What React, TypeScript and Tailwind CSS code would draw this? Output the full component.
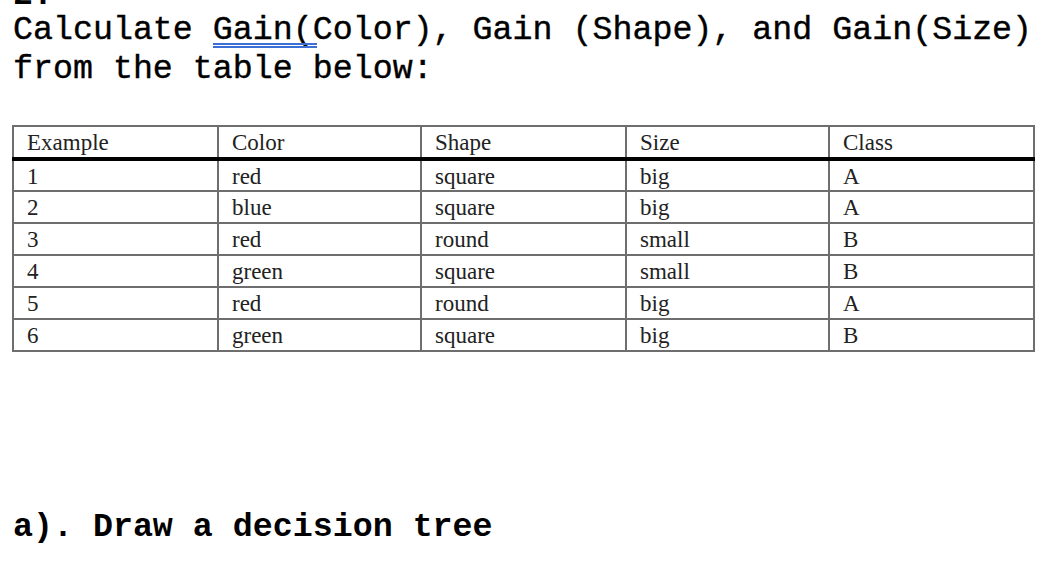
import React from "react";

const ROWS = [
  ["1", "red", "square", "big", "A"],
  ["2", "blue", "square", "big", "A"],
  ["3", "red", "round", "small", "B"],
  ["4", "green", "square", "small", "B"],
  ["5", "red", "round", "big", "A"],
  ["6", "green", "square", "big", "B"],
];

const HEADERS = ["Example", "Color", "Shape", "Size", "Class"];
const WIDTHS = ["w-[205px]", "w-[203px]", "w-[205px]", "w-[203px]", "w-[205px]"];

const mono = { fontFamily: '"Liberation Mono", "Courier New", monospace' };
const serif = { fontFamily: '"Liberation Serif", "Times New Roman", serif' };

export default function App() {
  return (
    <div className="w-[1041px] h-[569px] bg-white overflow-hidden text-black">
      {/* cut off line from previous question */}
      <div className="h-[6px] overflow-hidden pl-[13px]">
        <div
          className="mt-[-24px] text-[33.3px] leading-[39px] font-bold"
          style={mono}
        >
          2.
        </div>
      </div>

      <div
        className="pl-[13px] pt-[5px] text-[33.3px] leading-[39px] [-webkit-text-stroke:0.4px_black]"
        style={mono}
      >
        <div className="whitespace-pre">
          Calculate{" "}
          <span className="relative">
            Gain(
            <span className="absolute left-0 right-[-4px] top-[32px] h-[5px] border-y-2 border-[#3b6fd6]" />
          </span>
          Color), Gain (Shape), and Gain(Size)
        </div>
        <div className="whitespace-pre">from the table below:</div>
      </div>

      <div className="pl-[12px] pt-[36px]">
        <table
          className="border-collapse border-2 border-[#6e6e6e] text-[23px] text-[#222]"
          style={serif}
        >
          <thead>
            <tr className="h-[33px]">
              {HEADERS.map((h, i) => (
                <th
                  key={h}
                  className={`${WIDTHS[i]} border-2 border-[#6e6e6e] border-b-4 border-b-black text-left font-normal align-top pl-[13px] pt-[3px] leading-[26px]`}
                >
                  {h}
                </th>
              ))}
            </tr>
          </thead>
          <tbody>
            {ROWS.map((row) => (
              <tr key={row[0]} className="h-[32px]">
                {row.map((cell, i) => (
                  <td
                    key={i}
                    className="border-2 border-[#6e6e6e] pl-[13px] pt-[2px] align-top leading-[27px]"
                  >
                    {cell}
                  </td>
                ))}
              </tr>
            ))}
          </tbody>
        </table>
      </div>

      <div
        className="pl-[13px] pt-[156px] text-[33.3px] leading-[39px] font-bold whitespace-pre"
        style={mono}
      >
        a). Draw a decision tree
      </div>
    </div>
  );
}
